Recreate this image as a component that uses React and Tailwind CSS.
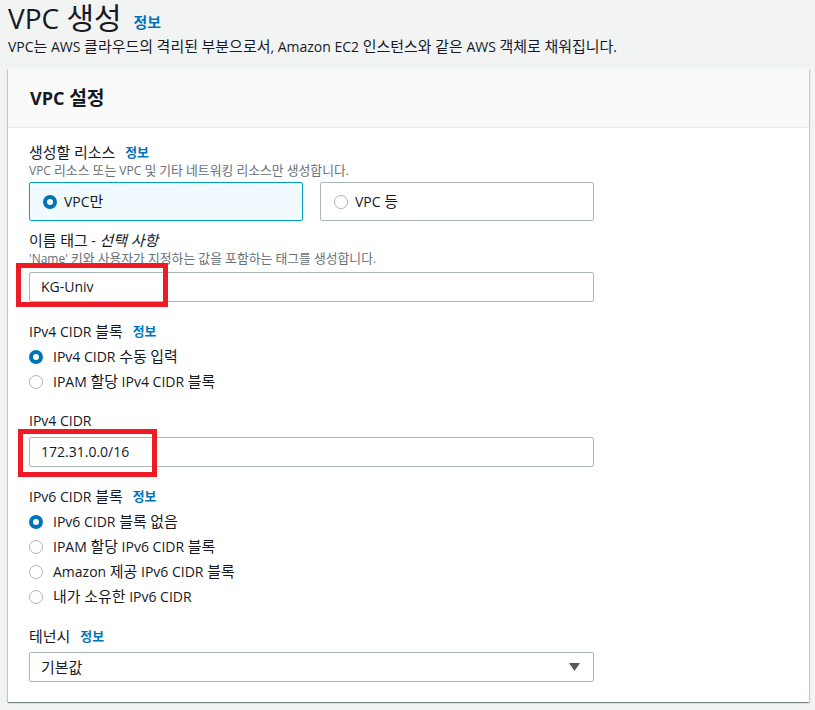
import React from "react";

const FONT = { fontFamily: '"Open Sans", "Noto Sans CJK KR", sans-serif' };

function K({ t }) {
  const parts = t.split(/([\uac00-\ud7af]+)/);
  return (
    <>
      {parts.map((p, i) =>
        /[\uac00-\ud7af]/.test(p) ? (
          <span key={i} className="text-[1.07em]">
            {p}
          </span>
        ) : (
          <React.Fragment key={i}>{p}</React.Fragment>
        )
      )}
    </>
  );
}

function Info({ className = "" }) {
  return (
    <span className={`text-[12px] font-bold text-[#0073bb] ml-[10px] ${className}`}>
      <K t="정보" />
    </span>
  );
}

function Radio({ checked }) {
  return checked ? (
    <span className="inline-block w-[14px] h-[14px] rounded-full border-[4px] border-[#0073bb] bg-white shrink-0" />
  ) : (
    <span className="inline-block w-[14px] h-[14px] rounded-full border-[1.5px] border-[#aab7b8] bg-white shrink-0" />
  );
}

function RadioRow({ checked, text }) {
  return (
    <div className="h-[25px] flex items-center gap-[10px] text-[14px] leading-[20px] text-[#16191f]">
      <Radio checked={checked} />
      <span>
        <K t={text} />
      </span>
    </div>
  );
}

function Label({ text, info = true }) {
  return (
    <div className="h-[20px] flex items-center text-[14px] leading-[20px] text-[#16191f]">
      <span>
        <K t={text} />
      </span>
      {info && <Info />}
    </div>
  );
}

function Desc({ text }) {
  return (
    <div className="h-[16px] flex items-center text-[12px] leading-[16px] text-[#687078] whitespace-nowrap">
      <span>
        <K t={text} />
      </span>
    </div>
  );
}

function Input({ value, box }) {
  return (
    <div className="relative w-[565px] h-[30px]">
      <div className="w-full h-full border border-[#aab7b8] rounded-[2px] bg-white flex items-center pl-[11px] text-[14px] leading-[20px] text-[#16191f]">
        <K t={value} />
      </div>
      {box}
    </div>
  );
}

export default function App() {
  return (
    <div style={FONT} className="w-[815px] h-[710px] bg-[#f2f3f3] overflow-hidden text-[#16191f]">
      <div className="pl-[8px]">
        <div className="h-[36px] flex items-center">
          <span className="text-[28px] leading-[36px] text-[#16191f] whitespace-nowrap">
            <K t="VPC 생성" />
          </span>
          <span className="text-[14px] font-bold text-[#0073bb] ml-[12px] mt-[8px]">
            <K t="정보" />
          </span>
        </div>
        <div className="h-[20px] flex items-center text-[14px] leading-[20px] text-[#16191f] whitespace-nowrap">
          <span>
            <K t="VPC는 AWS 클라우드의 격리된 부분으로서, Amazon EC2 인스턴스와 같은 AWS 객체로 채워집니다." />
          </span>
        </div>
      </div>

      <div className="mt-[13px] ml-[8px] w-[801px] bg-white shadow-[0_1px_1px_0_rgba(0,28,36,0.3),1px_1px_1px_0_rgba(0,28,36,0.15),-1px_1px_1px_0_rgba(0,28,36,0.15)]">
        <div className="h-[59px] bg-[#fafafa] border-b border-[#eaeded] flex items-center pl-[22px]">
          <span className="text-[18px] font-bold text-[#16191f]">
            <K t="VPC 설정" />
          </span>
        </div>
        <div className="pl-[21px] pt-[14px] pb-[20px]">
          <Label text="생성할 리소스" />
          <Desc text="VPC 리소스 또는 VPC 및 기타 네트워킹 리소스만 생성합니다." />
          <div className="mt-[4px] flex gap-[17px]">
            <div className="w-[274px] h-[39px] border border-[#00a1c9] bg-[#f1faff] rounded-[2px] flex items-center pl-[13px] gap-[7px] text-[14px]">
              <Radio checked />
              <span>
                <K t="VPC만" />
              </span>
            </div>
            <div className="w-[274px] h-[39px] border border-[#aab7b8] bg-white rounded-[2px] flex items-center pl-[13px] gap-[7px] text-[14px]">
              <Radio />
              <span>
                <K t="VPC 등" />
              </span>
            </div>
          </div>

          <div className="mt-[9px] h-[20px] flex items-center text-[14px] leading-[20px] text-[#16191f]">
            <span>
              <K t="이름 태그 - " />
              <i>
                <K t="선택 사항" />
              </i>
            </span>
          </div>
          <Desc text="'Name' 키와 사용자가 지정하는 값을 포함하는 태그를 생성합니다." />
          <div className="mt-[6px]">
            <Input
              value="KG-Univ"
              box={<div className="absolute left-[-13px] top-[-9px] w-[152px] h-[44px] border-[5px] border-[#ed1c24]" />}
            />
          </div>

          <div className="mt-[19px]">
            <Label text="IPv4 CIDR 블록" />
          </div>
          <div className="mt-[3px]">
            <RadioRow checked text="IPv4 CIDR 수동 입력" />
            <RadioRow text="IPAM 할당 IPv4 CIDR 블록" />
          </div>

          <div className="mt-[17px]">
            <Label text="IPv4 CIDR" info={false} />
          </div>
          <div className="mt-[6px]">
            <Input
              value="172.31.0.0/16"
              box={<div className="absolute left-[-11px] top-[-8px] w-[139px] h-[48px] border-[5px] border-[#ed1c24]" />}
            />
          </div>

          <div className="mt-[19px]">
            <Label text="IPv6 CIDR 블록" />
          </div>
          <div className="mt-[3px]">
            <RadioRow checked text="IPv6 CIDR 블록 없음" />
            <RadioRow text="IPAM 할당 IPv6 CIDR 블록" />
            <RadioRow text="Amazon 제공 IPv6 CIDR 블록" />
            <RadioRow text="내가 소유한 IPv6 CIDR" />
          </div>

          <div className="mt-[17px]">
            <Label text="테넌시" />
          </div>
          <div className="mt-[6px] w-[565px] h-[30px] border border-[#aab7b8] rounded-[2px] bg-white flex items-center justify-between pl-[11px] pr-[13px] text-[14px]">
            <span>
              <K t="기본값" />
            </span>
            <svg width="11" height="8" viewBox="0 0 11 8">
              <polygon points="0,0 11,0 5.5,8" fill="#545b64" />
            </svg>
          </div>
        </div>
      </div>
    </div>
  );
}
